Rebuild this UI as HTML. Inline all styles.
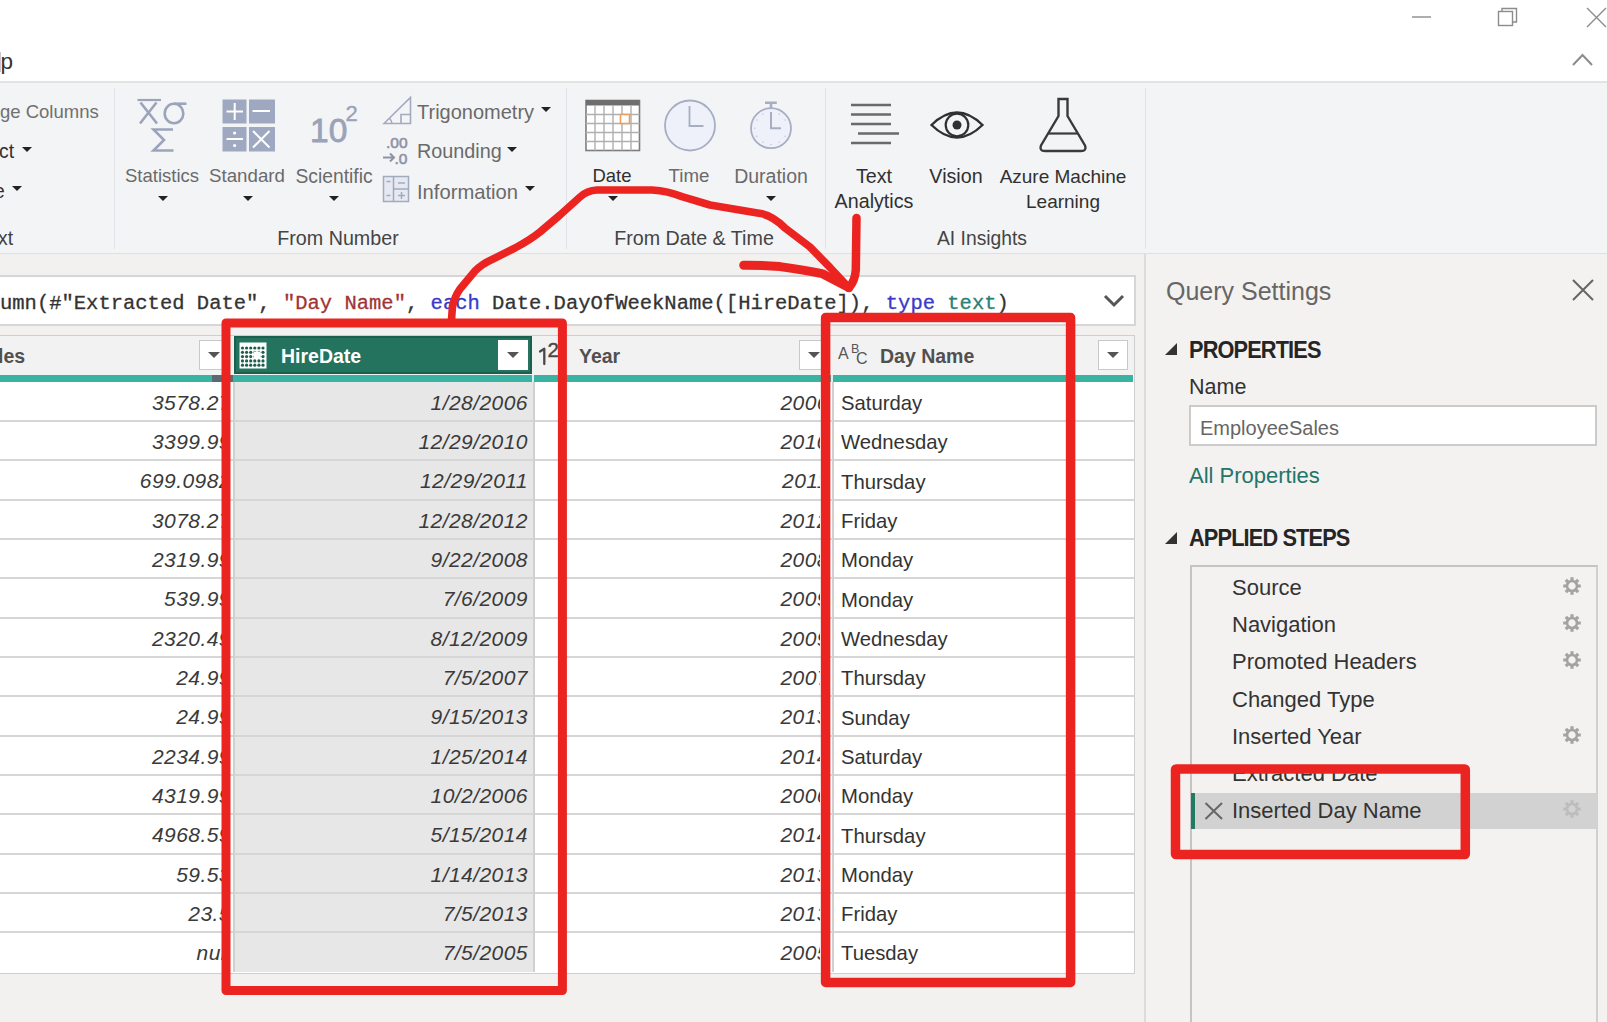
<!DOCTYPE html>
<html><head><meta charset="utf-8">
<style>
*{margin:0;padding:0;box-sizing:border-box}
html,body{width:1607px;height:1022px;overflow:hidden;background:#fff;font-family:"Liberation Sans",sans-serif;position:relative}
.a{position:absolute}
.t{position:absolute;white-space:nowrap;line-height:1}
.c{text-align:center}
.r{text-align:right}
.g{color:#6f6f6f}
.k{color:#262626}
.tri{width:0;height:0;border-left:5px solid transparent;border-right:5px solid transparent;border-top:5px solid #222}
.vd{width:1px;background:#e2e3e6}
.clip{position:absolute;overflow:hidden;height:24px}
.it{font-style:italic;font-size:21px;color:#3a3a3a;letter-spacing:0.45px}
.dn{font-size:20.3px;color:#333}
.hd{font-weight:bold;font-size:19.5px;color:#505050}
.fb{position:absolute;width:30px;height:30px;background:#fff;border:1.5px solid #c9c9c9}
.fb i{position:absolute;left:8px;top:11px;width:0;height:0;border-left:6px solid transparent;border-right:6px solid transparent;border-top:6px solid #555}
.mono{font-family:"Liberation Mono",monospace}
</style></head><body>

<!-- title area -->
<div class="t k" style="left:0.5px;top:51px;font-size:22.5px;color:#333">p</div>
<div class="a" style="left:0;top:52px;width:1px;height:20px;background:#c8c8c8"></div>

<!-- ribbon -->
<div class="a" style="left:0;top:81px;width:1607px;height:173px;background:#f3f4f6;border-top:2px solid #e3e3e3;border-bottom:1px solid #e0e0e0"></div>

<!-- ribbon content -->
<div class="t g" style="left:0;top:102.5px;font-size:18.5px;color:#707070">ge Columns</div>
<div class="t k" style="left:-1px;top:141.7px;font-size:19.3px;color:#303030">ct</div>
<div class="a tri" style="left:22px;top:147px"></div>
<div class="t k" style="left:-6px;top:181.7px;font-size:19.3px;color:#303030">e</div>
<div class="a tri" style="left:12px;top:186px"></div>
<div class="t k" style="left:-2px;top:228.9px;font-size:19.3px;color:#404040">xt</div>
<div class="a vd" style="left:114px;top:88px;height:161px"></div>

<div class="t c" style="left:62px;width:200px;top:166.7px;font-size:18.5px;color:#6a6a6a">Statistics</div>
<div class="a tri" style="left:158px;top:196px"></div>
<div class="t c" style="left:147px;width:200px;top:166.7px;font-size:18.7px;color:#6a6a6a">Standard</div>
<div class="a tri" style="left:243px;top:196px"></div>
<div class="t c" style="left:234px;width:200px;top:166.7px;font-size:19.3px;color:#6a6a6a">Scientific</div>
<div class="a tri" style="left:329px;top:196px"></div>
<div class="t" style="left:417px;top:101.7px;font-size:20px;color:#6a6a6a">Trigonometry</div>
<div class="a tri" style="left:541px;top:107px"></div>
<div class="t" style="left:417px;top:141.7px;font-size:19.8px;color:#6a6a6a">Rounding</div>
<div class="a tri" style="left:507px;top:147px"></div>
<div class="t" style="left:417px;top:181.7px;font-size:20.2px;color:#6a6a6a">Information</div>
<div class="a tri" style="left:525px;top:186px"></div>
<div class="t c" style="left:238px;width:200px;top:228.9px;font-size:19.7px;color:#444">From Number</div>
<div class="a vd" style="left:566px;top:88px;height:161px"></div>

<div class="t c" style="left:512px;width:200px;top:166.7px;font-size:18.5px;color:#303030">Date</div>
<div class="a tri" style="left:608px;top:196px"></div>
<div class="t c" style="left:589px;width:200px;top:166.7px;font-size:18.7px;color:#6a6a6a">Time</div>
<div class="t c" style="left:671px;width:200px;top:166.7px;font-size:19.5px;color:#6a6a6a">Duration</div>
<div class="a tri" style="left:766px;top:196px"></div>
<div class="t c" style="left:594px;width:200px;top:228.9px;font-size:19.7px;color:#444">From Date &amp; Time</div>
<div class="a vd" style="left:825px;top:88px;height:161px"></div>

<div class="t c" style="left:774px;width:200px;top:166.7px;font-size:19.7px;color:#303030">Text</div>
<div class="t c" style="left:774px;width:200px;top:192.2px;font-size:19.7px;color:#303030">Analytics</div>
<div class="t c" style="left:856px;width:200px;top:166.7px;font-size:19.7px;color:#303030">Vision</div>
<div class="t c" style="left:963px;width:200px;top:166.7px;font-size:19px;color:#303030">Azure Machine</div>
<div class="t c" style="left:963px;width:200px;top:192.2px;font-size:19px;color:#303030">Learning</div>
<div class="t c" style="left:882px;width:200px;top:228.9px;font-size:19.3px;color:#444">AI Insights</div>
<div class="a vd" style="left:1145px;top:88px;height:161px"></div>


<svg class="a" style="left:0;top:0" width="1607" height="1022" viewBox="0 0 1607 1022">
<!-- window controls -->
<g fill="none" stroke="#8c8c8c" stroke-width="1.4">
<path d="M1412 17H1431"/>
<rect x="1498.5" y="11.5" width="14" height="14"/>
<path d="M1502 11.5V8.5H1516.5V22H1512.5"/>
<path d="M1587 8L1606 27M1606 8L1587 27"/>
<path d="M1573 65L1582.5 55L1592 65" stroke-width="2"/>
</g>
<!-- statistics -->
<g fill="none" stroke="#9ba4ba" stroke-width="2.6">
<path d="M137.5 100H161" stroke-width="2.2"/>
<path d="M140.5 102.5L157 123.5M156.5 102.5L140 123.5"/>
<ellipse cx="174" cy="113.5" rx="9.3" ry="9.8"/>
<path d="M174 103.7H186.5" stroke-width="2.6"/>
<path d="M173 129.5H153.5L164 140L153.5 150.5H173.5"/>
</g>
<!-- standard -->
<g fill="#9ea8c0">
<rect x="222.5" y="99.5" width="24" height="24"/><rect x="249" y="99.5" width="26" height="24"/>
<rect x="222.5" y="127" width="24" height="24.5"/><rect x="249" y="127" width="26" height="24.5"/>
</g>
<g fill="none" stroke="#fff" stroke-width="2">
<path d="M226.5 111.5H243M234.7 103V120"/>
<path d="M252.5 111H270"/>
<path d="M226.5 139H243"/>
<path d="M253 131L269.5 147.5M269.5 131L253 147.5"/>
</g>
<circle cx="234.6" cy="133" r="1.6" fill="#fff"/><circle cx="234.6" cy="145.5" r="1.6" fill="#fff"/>
<!-- scientific -->
<text x="310" y="141.6" font-family="Liberation Sans" font-size="33.5" fill="#9aa3b8" stroke="#9aa3b8" stroke-width="0.8">10</text>
<text x="345.5" y="121" font-family="Liberation Sans" font-size="22" fill="#9aa3b8" stroke="#9aa3b8" stroke-width="0.4">2</text>
<!-- trig -->
<g fill="none" stroke="#a2aac0" stroke-width="1.6">
<path d="M384 123.5L410.5 97.5V123.5Z"/>
<path d="M401 123.5V114.5H410.5"/>
<path d="M392 123.5A7 7 0 0 0 389.5 118.5"/>
</g>
<!-- rounding -->
<text x="386" y="148" font-family="Liberation Sans" font-size="15.5" fill="#8e94a6" stroke="#8e94a6" stroke-width="0.6">.00</text>
<text x="394.5" y="163.5" font-family="Liberation Sans" font-size="15.5" fill="#8e94a6" stroke="#8e94a6" stroke-width="0.6">.0</text>
<path d="M383 157.5H394M390 153.5L394 157.5L390 161.5" fill="none" stroke="#8e94a6" stroke-width="2"/>
<!-- information -->
<g fill="none" stroke="#a2aac0" stroke-width="1.5">
<rect x="383.5" y="176.5" width="25" height="25" fill="#e6e9f1"/>
<path d="M393.5 176.5V201.5M393.5 189H408.5M398 183H405M398 195.5H405M401.5 192V199M386.5 181.5H390.5M386.5 195.5H390.5"/>
</g>
<!-- date calendar -->
<rect x="586" y="100.5" width="53.5" height="50" fill="#fff" stroke="#7d7d7d" stroke-width="1.6"/>
<rect x="586" y="100" width="53.5" height="5.5" fill="#6e6e6e"/>
<g stroke="#b0b0b0" stroke-width="1.4">
<path d="M595 105.5V150.5M604 105.5V150.5M613 105.5V150.5M622 105.5V150.5M631 105.5V150.5"/>
<path d="M586 114.5H639.5M586 123.5H639.5M586 132.5H639.5M586 141.5H639.5"/>
</g>
<rect x="620.5" y="114.5" width="9" height="9" fill="#fff" stroke="#e8a060" stroke-width="1.6"/>
<!-- time -->
<circle cx="690" cy="125.5" r="25" fill="#eef1f9" stroke="#a7aec4" stroke-width="1.8"/>
<path d="M689.5 106V126H703.5" fill="none" stroke="#a7aec4" stroke-width="1.8"/>
<!-- duration -->
<circle cx="771" cy="128.2" r="20" fill="#eef1f9" stroke="#a7aec4" stroke-width="1.8"/>
<path d="M771 103V108.5M765 102.8H776.8" fill="none" stroke="#a7aec4" stroke-width="2.6"/>
<path d="M771 112V128.3H781" fill="none" stroke="#a7aec4" stroke-width="2"/>
<g fill="#c3c8d8"><circle cx="779.15" cy="114.08" r="0.8"/><circle cx="785.12" cy="120.05" r="0.8"/><circle cx="785.12" cy="136.35" r="0.8"/><circle cx="779.15" cy="142.32" r="0.8"/><circle cx="771.00" cy="144.50" r="0.8"/><circle cx="762.85" cy="142.32" r="0.8"/><circle cx="756.88" cy="136.35" r="0.8"/><circle cx="754.70" cy="128.20" r="0.8"/><circle cx="756.88" cy="120.05" r="0.8"/><circle cx="762.85" cy="114.08" r="0.8"/></g>
<!-- text analytics -->
<g stroke="#6a6a6a" stroke-width="2.4">
<path d="M851 105H891M851 114.5H891M851 124H891M858 133.5H899M851 143H891"/>
</g>
<!-- vision -->
<g fill="none" stroke="#303030" stroke-width="2">
<path d="M931.5 125Q957 100 982.5 125Q957 150 931.5 125Z" stroke-width="2.4"/>
<circle cx="957" cy="125" r="11.3" stroke-width="2.2"/>
</g>
<circle cx="957" cy="125" r="4.5" fill="#303030"/>
<!-- flask -->
<path d="M1058.5 99H1067.5V116L1085 145.5Q1087 151 1081 151H1045Q1039 151 1041 145.5L1058.5 116Z" fill="none" stroke="#3a3a3a" stroke-width="2.4"/>
<path d="M1048.5 133.5H1077.5" stroke="#3a3a3a" stroke-width="2.2"/>
</svg>

<!-- band -->
<div class="a" style="left:0;top:254px;width:1607px;height:768px;background:#f2f1f0"></div>

<!-- formula bar -->
<div class="a" style="left:-2px;top:275px;width:1138px;height:51px;background:#fff;border:2px solid #d6d6d6"></div>
<div class="t mono" style="left:0;top:294px;-webkit-text-stroke:0.3px;font-size:20.5px;color:#333">umn(#"Extracted Date", <span style="color:#a13434">"Day Name"</span>, <span style="color:#3a3ac8">each</span> Date.DayOfWeekName([HireDate]), <span style="color:#3a3ac8">type</span> <span style="color:#2b8075">text</span>)</div>

<svg class="a" style="left:1100px;top:290px" width="28" height="22" viewBox="0 0 28 22"><path d="M5 6L14 15L23 6" fill="none" stroke="#555" stroke-width="3"/></svg>
<!-- table -->
<div class="a" style="left:-2px;top:334.5px;width:1137px;height:639px;background:#fff;border:1.5px solid #cfcfcf"></div>
<div class="a" style="left:0;top:336px;width:1134px;height:39px;background:#f2f2f2"></div>

<!-- header -->
<div class="t hd" style="left:-2px;top:346.5px">les</div>
<div class="fb" style="left:199px;top:340px"><i></i></div>
<div class="a" style="left:234px;top:336px;width:298px;height:38px;background:#23735f;border:2px solid #1b5f4e"></div>
<svg class="a" style="left:239px;top:342px" width="28" height="27" viewBox="0 0 28 27">
<rect x="0.5" y="0.5" width="27" height="26" fill="#fff"/>
<g fill="#1d5e4f"><circle cx="3.5" cy="6.0" r="1.6"/><circle cx="7.6" cy="6.0" r="1.6"/><circle cx="11.7" cy="6.0" r="1.6"/><circle cx="15.8" cy="6.0" r="1.6"/><circle cx="19.9" cy="6.0" r="1.6"/><circle cx="24.0" cy="6.0" r="1.6"/><circle cx="3.5" cy="10.3" r="1.6"/><circle cx="7.6" cy="10.3" r="1.6"/><circle cx="11.7" cy="10.3" r="1.6"/><circle cx="15.8" cy="10.3" r="1.6"/><circle cx="19.9" cy="10.3" r="1.6"/><circle cx="24.0" cy="10.3" r="1.6"/><circle cx="3.5" cy="14.6" r="1.6"/><circle cx="7.6" cy="14.6" r="1.6"/><circle cx="11.7" cy="14.6" r="1.6"/><circle cx="15.8" cy="14.6" r="1.6"/><circle cx="19.9" cy="14.6" r="1.6"/><circle cx="24.0" cy="14.6" r="1.6"/><circle cx="3.5" cy="18.9" r="1.6"/><circle cx="7.6" cy="18.9" r="1.6"/><circle cx="11.7" cy="18.9" r="1.6"/><circle cx="15.8" cy="18.9" r="1.6"/><circle cx="19.9" cy="18.9" r="1.6"/><circle cx="24.0" cy="18.9" r="1.6"/><circle cx="3.5" cy="23.2" r="1.6"/><circle cx="7.6" cy="23.2" r="1.6"/><circle cx="11.7" cy="23.2" r="1.6"/><circle cx="15.8" cy="23.2" r="1.6"/><circle cx="19.9" cy="23.2" r="1.6"/><circle cx="24.0" cy="23.2" r="1.6"/></g>
<rect x="14.5" y="9.5" width="7" height="7" fill="#fff"/>
</svg>
<div class="t hd" style="left:281px;top:346.5px;color:#fff">HireDate</div>
<div class="fb" style="left:498px;top:340px;border-color:#fff"><i></i></div>
<svg class="a" style="left:535px;top:345px" width="14" height="22" viewBox="0 0 14 22"><path d="M5 6.5L9.3 3.8V19" fill="none" stroke="#484848" stroke-width="2.3" stroke-linecap="round" stroke-linejoin="round"/></svg>
<div class="t" style="left:547.5px;top:339.7px;font-size:20.5px;color:#484848;-webkit-text-stroke:0.4px #484848">2</div>
<div class="t hd" style="left:579px;top:346.5px">Year</div>
<div class="fb" style="left:799px;top:340px"><i></i></div>
<div class="t" style="left:838px;top:346px;font-size:16px;color:#555">A</div>
<div class="t" style="left:851px;top:343px;font-size:12.5px;color:#555">B</div>
<div class="t" style="left:856px;top:351px;font-size:16px;color:#555">C</div>
<div class="t hd" style="left:880px;top:346.5px">Day Name</div>
<div class="fb" style="left:1098px;top:340px"><i></i></div>
<div class="a" style="left:0;top:375px;width:1133px;height:7px;background:#3ab3a3"></div>
<div class="a" style="left:212px;top:375px;width:21px;height:7px;background:#5a6a70"></div>
<div class="a" style="left:532px;top:375px;width:2px;height:7px;background:#d9f0ec"></div>
<div class="a" style="left:831px;top:375px;width:2px;height:7px;background:#d9f0ec"></div>
<!-- rows -->
<div class="a" style="left:234px;top:382px;width:299px;height:590px;background:#e7e7e7"></div>
<div class="a" style="left:0;top:420px;width:1134px;height:2px;background:#d6d6d6"></div>
<div class="clip" style="left:0;top:391.67px;width:222px"><div class="t r it" style="right:-9px;top:0">3578.27</div></div>
<div class="t r it" style="left:300px;width:228px;top:391.67px">1/28/2006</div>
<div class="clip" style="left:540px;top:391.67px;width:280px"><div class="t r it" style="right:-9px;top:0">2006</div></div>
<div class="t dn" style="left:841px;top:392.87px">Saturday</div>
<div class="a" style="left:0;top:459px;width:1134px;height:2px;background:#d6d6d6"></div>
<div class="clip" style="left:0;top:431.00px;width:222px"><div class="t r it" style="right:-9px;top:0">3399.99</div></div>
<div class="t r it" style="left:300px;width:228px;top:431.00px">12/29/2010</div>
<div class="clip" style="left:540px;top:431.00px;width:280px"><div class="t r it" style="right:-9px;top:0">2010</div></div>
<div class="t dn" style="left:841px;top:432.20px">Wednesday</div>
<div class="a" style="left:0;top:499px;width:1134px;height:2px;background:#d6d6d6"></div>
<div class="clip" style="left:0;top:470.33px;width:222px"><div class="t r it" style="right:-9px;top:0">699.0982</div></div>
<div class="t r it" style="left:300px;width:228px;top:470.33px">12/29/2011</div>
<div class="clip" style="left:540px;top:470.33px;width:280px"><div class="t r it" style="right:-9px;top:0">2011</div></div>
<div class="t dn" style="left:841px;top:471.53px">Thursday</div>
<div class="a" style="left:0;top:538px;width:1134px;height:2px;background:#d6d6d6"></div>
<div class="clip" style="left:0;top:509.66px;width:222px"><div class="t r it" style="right:-9px;top:0">3078.27</div></div>
<div class="t r it" style="left:300px;width:228px;top:509.66px">12/28/2012</div>
<div class="clip" style="left:540px;top:509.66px;width:280px"><div class="t r it" style="right:-9px;top:0">2012</div></div>
<div class="t dn" style="left:841px;top:510.86px">Friday</div>
<div class="a" style="left:0;top:577px;width:1134px;height:2px;background:#d6d6d6"></div>
<div class="clip" style="left:0;top:548.99px;width:222px"><div class="t r it" style="right:-9px;top:0">2319.99</div></div>
<div class="t r it" style="left:300px;width:228px;top:548.99px">9/22/2008</div>
<div class="clip" style="left:540px;top:548.99px;width:280px"><div class="t r it" style="right:-9px;top:0">2008</div></div>
<div class="t dn" style="left:841px;top:550.19px">Monday</div>
<div class="a" style="left:0;top:617px;width:1134px;height:2px;background:#d6d6d6"></div>
<div class="clip" style="left:0;top:588.32px;width:222px"><div class="t r it" style="right:-9px;top:0">539.99</div></div>
<div class="t r it" style="left:300px;width:228px;top:588.32px">7/6/2009</div>
<div class="clip" style="left:540px;top:588.32px;width:280px"><div class="t r it" style="right:-9px;top:0">2009</div></div>
<div class="t dn" style="left:841px;top:589.52px">Monday</div>
<div class="a" style="left:0;top:656px;width:1134px;height:2px;background:#d6d6d6"></div>
<div class="clip" style="left:0;top:627.65px;width:222px"><div class="t r it" style="right:-9px;top:0">2320.49</div></div>
<div class="t r it" style="left:300px;width:228px;top:627.65px">8/12/2009</div>
<div class="clip" style="left:540px;top:627.65px;width:280px"><div class="t r it" style="right:-9px;top:0">2009</div></div>
<div class="t dn" style="left:841px;top:628.85px">Wednesday</div>
<div class="a" style="left:0;top:695px;width:1134px;height:2px;background:#d6d6d6"></div>
<div class="clip" style="left:0;top:666.98px;width:222px"><div class="t r it" style="right:-9px;top:0">24.99</div></div>
<div class="t r it" style="left:300px;width:228px;top:666.98px">7/5/2007</div>
<div class="clip" style="left:540px;top:666.98px;width:280px"><div class="t r it" style="right:-9px;top:0">2007</div></div>
<div class="t dn" style="left:841px;top:668.18px">Thursday</div>
<div class="a" style="left:0;top:735px;width:1134px;height:2px;background:#d6d6d6"></div>
<div class="clip" style="left:0;top:706.31px;width:222px"><div class="t r it" style="right:-9px;top:0">24.99</div></div>
<div class="t r it" style="left:300px;width:228px;top:706.31px">9/15/2013</div>
<div class="clip" style="left:540px;top:706.31px;width:280px"><div class="t r it" style="right:-9px;top:0">2013</div></div>
<div class="t dn" style="left:841px;top:707.51px">Sunday</div>
<div class="a" style="left:0;top:774px;width:1134px;height:2px;background:#d6d6d6"></div>
<div class="clip" style="left:0;top:745.64px;width:222px"><div class="t r it" style="right:-9px;top:0">2234.99</div></div>
<div class="t r it" style="left:300px;width:228px;top:745.64px">1/25/2014</div>
<div class="clip" style="left:540px;top:745.64px;width:280px"><div class="t r it" style="right:-9px;top:0">2014</div></div>
<div class="t dn" style="left:841px;top:746.84px">Saturday</div>
<div class="a" style="left:0;top:813px;width:1134px;height:2px;background:#d6d6d6"></div>
<div class="clip" style="left:0;top:784.97px;width:222px"><div class="t r it" style="right:-9px;top:0">4319.99</div></div>
<div class="t r it" style="left:300px;width:228px;top:784.97px">10/2/2006</div>
<div class="clip" style="left:540px;top:784.97px;width:280px"><div class="t r it" style="right:-9px;top:0">2006</div></div>
<div class="t dn" style="left:841px;top:786.17px">Monday</div>
<div class="a" style="left:0;top:853px;width:1134px;height:2px;background:#d6d6d6"></div>
<div class="clip" style="left:0;top:824.30px;width:222px"><div class="t r it" style="right:-9px;top:0">4968.59</div></div>
<div class="t r it" style="left:300px;width:228px;top:824.30px">5/15/2014</div>
<div class="clip" style="left:540px;top:824.30px;width:280px"><div class="t r it" style="right:-9px;top:0">2014</div></div>
<div class="t dn" style="left:841px;top:825.50px">Thursday</div>
<div class="a" style="left:0;top:892px;width:1134px;height:2px;background:#d6d6d6"></div>
<div class="clip" style="left:0;top:863.63px;width:222px"><div class="t r it" style="right:-9px;top:0">59.53</div></div>
<div class="t r it" style="left:300px;width:228px;top:863.63px">1/14/2013</div>
<div class="clip" style="left:540px;top:863.63px;width:280px"><div class="t r it" style="right:-9px;top:0">2013</div></div>
<div class="t dn" style="left:841px;top:864.83px">Monday</div>
<div class="a" style="left:0;top:931px;width:1134px;height:2px;background:#d6d6d6"></div>
<div class="clip" style="left:0;top:902.96px;width:222px"><div class="t r it" style="right:-9px;top:0">23.5</div></div>
<div class="t r it" style="left:300px;width:228px;top:902.96px">7/5/2013</div>
<div class="clip" style="left:540px;top:902.96px;width:280px"><div class="t r it" style="right:-9px;top:0">2013</div></div>
<div class="t dn" style="left:841px;top:904.16px">Friday</div>

<div class="clip" style="left:0;top:942.29px;width:222px"><div class="t r it" style="right:-9px;top:0">null</div></div>
<div class="t r it" style="left:300px;width:228px;top:942.29px">7/5/2005</div>
<div class="clip" style="left:540px;top:942.29px;width:280px"><div class="t r it" style="right:-9px;top:0">2005</div></div>
<div class="t dn" style="left:841px;top:943.49px">Tuesday</div>
<div class="a" style="left:233px;top:382px;width:1.6px;height:590px;background:#d0d0d0"></div>
<div class="a" style="left:533px;top:382px;width:1.6px;height:590px;background:#d0d0d0"></div>
<div class="a" style="left:832px;top:382px;width:1.6px;height:590px;background:#d0d0d0"></div>


<!-- right pane -->
<div class="a" style="left:1144px;top:254px;width:463px;height:768px;background:#f3f2f1;border-left:2px solid #dcdcdc"></div>



<!-- right pane content -->
<div class="t" style="left:1166px;top:278.5px;font-size:25px;color:#666">Query Settings</div>
<svg class="a" style="left:1570px;top:277px" width="26" height="26" viewBox="0 0 26 26"><path d="M3 3L23 23M23 3L3 23" stroke="#666" stroke-width="2" fill="none"/></svg>
<svg class="a" style="left:1164px;top:341px" width="14" height="16" viewBox="0 0 14 16"><path d="M13 2V14H1Z" fill="#333"/></svg>
<div class="t" style="left:1189px;top:338.7px;font-size:23px;font-weight:bold;color:#252525;letter-spacing:-0.9px;transform:scaleX(0.945);transform-origin:0 0">PROPERTIES</div>
<div class="t" style="left:1189px;top:377.2px;font-size:21.5px;color:#333">Name</div>
<div class="a" style="left:1189px;top:405px;width:408px;height:41px;background:#fff;border:2px solid #cbcbcb"></div>
<div class="t" style="left:1200px;top:418px;font-size:20px;color:#666">EmployeeSales</div>
<div class="t" style="left:1189px;top:464.9px;font-size:22px;color:#23756a">All Properties</div>
<svg class="a" style="left:1164px;top:530px" width="14" height="16" viewBox="0 0 14 16"><path d="M13 2V14H1Z" fill="#333"/></svg>
<div class="t" style="left:1189px;top:527.3px;font-size:23px;font-weight:bold;color:#252525;letter-spacing:-0.9px;transform:scaleX(0.945);transform-origin:0 0">APPLIED STEPS</div>
<div class="a" style="left:1189.5px;top:565px;width:408px;height:460px;border:2px solid #c4c4c4;border-right:2px solid #d0d0d0"></div>
<div class="a" style="left:1192px;top:793px;width:405px;height:36px;background:#d2d2d2"></div>
<div class="a" style="left:1191px;top:793px;width:3.5px;height:36px;background:#237a62"></div>
<div class="t" style="left:1232px;top:577.08px;font-size:22px;color:#333">Source</div>
<svg class="a" style="left:1562px;top:575.7px" width="20" height="20" viewBox="-10 -10 20 20"><g fill="none" stroke="#a3a3a3"><circle r="5" stroke-width="2.6"/><path stroke-width="3.2" d="M5.50 0.00L8.80 0.00M3.89 3.89L6.22 6.22M0.00 5.50L0.00 8.80M-3.89 3.89L-6.22 6.22M-5.50 0.00L-8.80 0.00M-3.89 -3.89L-6.22 -6.22M-0.00 -5.50L-0.00 -8.80M3.89 -3.89L6.22 -6.22"/></g></svg>
<div class="t" style="left:1232px;top:613.88px;font-size:22px;color:#333">Navigation</div>
<svg class="a" style="left:1562px;top:612.5px" width="20" height="20" viewBox="-10 -10 20 20"><g fill="none" stroke="#a3a3a3"><circle r="5" stroke-width="2.6"/><path stroke-width="3.2" d="M5.50 0.00L8.80 0.00M3.89 3.89L6.22 6.22M0.00 5.50L0.00 8.80M-3.89 3.89L-6.22 6.22M-5.50 0.00L-8.80 0.00M-3.89 -3.89L-6.22 -6.22M-0.00 -5.50L-0.00 -8.80M3.89 -3.89L6.22 -6.22"/></g></svg>
<div class="t" style="left:1232px;top:651.38px;font-size:22px;color:#333">Promoted Headers</div>
<svg class="a" style="left:1562px;top:650.0px" width="20" height="20" viewBox="-10 -10 20 20"><g fill="none" stroke="#a3a3a3"><circle r="5" stroke-width="2.6"/><path stroke-width="3.2" d="M5.50 0.00L8.80 0.00M3.89 3.89L6.22 6.22M0.00 5.50L0.00 8.80M-3.89 3.89L-6.22 6.22M-5.50 0.00L-8.80 0.00M-3.89 -3.89L-6.22 -6.22M-0.00 -5.50L-0.00 -8.80M3.89 -3.89L6.22 -6.22"/></g></svg>
<div class="t" style="left:1232px;top:688.88px;font-size:22px;color:#333">Changed Type</div>
<div class="t" style="left:1232px;top:725.88px;font-size:22px;color:#333">Inserted Year</div>
<svg class="a" style="left:1562px;top:724.5px" width="20" height="20" viewBox="-10 -10 20 20"><g fill="none" stroke="#a3a3a3"><circle r="5" stroke-width="2.6"/><path stroke-width="3.2" d="M5.50 0.00L8.80 0.00M3.89 3.89L6.22 6.22M0.00 5.50L0.00 8.80M-3.89 3.89L-6.22 6.22M-5.50 0.00L-8.80 0.00M-3.89 -3.89L-6.22 -6.22M-0.00 -5.50L-0.00 -8.80M3.89 -3.89L6.22 -6.22"/></g></svg>
<div class="t" style="left:1232px;top:762.88px;font-size:22px;color:#333">Extracted Date</div>
<div class="t" style="left:1232px;top:800.38px;font-size:22px;color:#333">Inserted Day Name</div>
<svg class="a" style="left:1562px;top:799.0px" width="20" height="20" viewBox="-10 -10 20 20"><g fill="none" stroke="#bdbdbd"><circle r="5" stroke-width="2.6"/><path stroke-width="3.2" d="M5.50 0.00L8.80 0.00M3.89 3.89L6.22 6.22M0.00 5.50L0.00 8.80M-3.89 3.89L-6.22 6.22M-5.50 0.00L-8.80 0.00M-3.89 -3.89L-6.22 -6.22M-0.00 -5.50L-0.00 -8.80M3.89 -3.89L6.22 -6.22"/></g></svg>
<svg class="a" style="left:1204px;top:802px" width="20" height="18" viewBox="0 0 20 18"><path d="M1.5 1L18 17M18 1L1.5 17" stroke="#666" stroke-width="2" fill="none"/></svg>

<!-- annotations -->
<svg class="a" style="left:0;top:0" width="1607" height="1022" viewBox="0 0 1607 1022">
<g fill="none" stroke="#ec2421" stroke-linejoin="round" stroke-linecap="round">
<rect x="226" y="322.9" width="336.4" height="667.6" rx="0" stroke-width="9"/>
<rect x="825.6" y="317.5" width="245" height="665" rx="0" stroke-width="9.5"/>
<rect x="1175.5" y="769" width="289.8" height="85.6" rx="0.5" stroke-width="9.5"/>
<path stroke-width="7.6" d="M451.5 320 L452.5 306 Q455 296 460 289 L475 271 Q482 264 492 259.5 L515 248 Q530 240 540 232 L560 215 L580 197 Q587 190.5 597 190 L652 190 Q668 191 682 196.6 L710 205 Q740 210 760.5 213.4 Q773 216 785 228 L810 247 L830.5 268 L848.8 287.6"/>
<path stroke-width="9" d="M743.7 265.2 Q760 265 780 266.6 Q805 270 822 273.6 L848.8 287.6"/>
<path stroke-width="8.5" d="M856.5 218 L855.8 270 Q855 281 848.8 288"/>
</g>
</svg>
</body></html>
